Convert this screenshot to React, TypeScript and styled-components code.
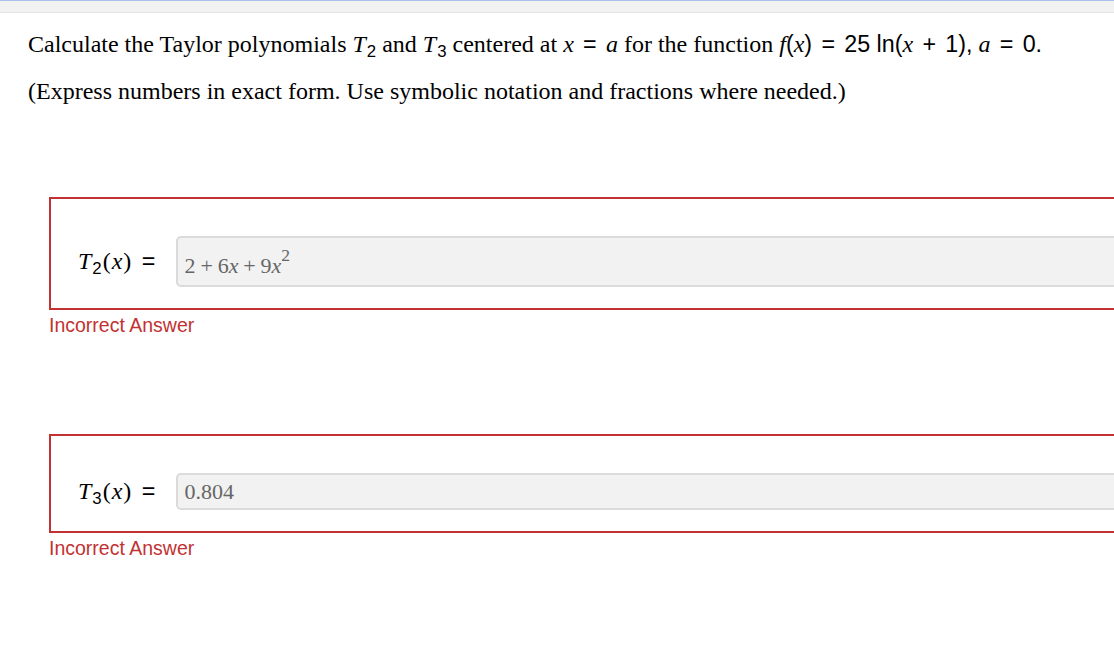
import styled, { createGlobalStyle } from "styled-components";

const GlobalStyle = createGlobalStyle`
  html, body {
    margin: 0;
    padding: 0;
    background: #ffffff;
    overflow-x: hidden;
  }
  body {
    font-family: "Liberation Serif", "Times New Roman", serif;
    color: #000;
  }
  *, *::before, *::after {
    box-sizing: border-box;
  }
`;

interface FieldProps {
  $tall?: boolean;
}

interface AnswerProps {
  sub: string;
  tall?: boolean;
  value: React.ReactNode;
}

const Answer: React.FC<AnswerProps> = ({ sub, tall, value }) => {
  return (
    <AnswerBlock>
      <Box>
        <Label>
          <Var>T</Var>
          <Sub>{sub}</Sub>
          <Paren>(</Paren>
          <Var>x</Var>
          <Paren>)</Paren>
          <Op>=</Op>
        </Label>
        <Field $tall={tall}>{value}</Field>
      </Box>
      <Feedback>Incorrect Answer</Feedback>
    </AnswerBlock>
  );
};

const App = () => {
  return (
    <>
      <GlobalStyle />
      <TopBar />
      <Content>
        <Prompt>
          Calculate the Taylor polynomials <Var>T</Var>
          <Sub>2</Sub> and <Var>T</Var>
          <Sub>3</Sub> centered at <Var>x</Var>
          <Op>=</Op>
          <Var>a</Var> for the function <Var>f</Var>
          <Num>(</Num>
          <Var>x</Var>
          <Num>)</Num>
          <Op>=</Op>
          <Num>25 ln(</Num>
          <Var>x</Var>
          <Op>+</Op>
          <Num>1),</Num> <Var>a</Var>
          <Op>=</Op>
          <Num>0.</Num>
        </Prompt>
        <Note>
          (Express numbers in exact form. Use symbolic notation and fractions
          where needed.)
        </Note>
        <Answer
          sub="2"
          tall
          value={
            <>
              2<FieldOp>+</FieldOp>6<i>x</i>
              <FieldOp>+</FieldOp>9<i>x</i>
              <Sup>2</Sup>
            </>
          }
        />
        <Answer sub="3" value="0.804" />
      </Content>
    </>
  );
};

export default App;

const TopBar = styled.div`
  height: 13px;
  border-top: 1px solid #a8c0ea;
  border-bottom: 1px solid #e3e3e3;
  background: #f2f2f2;
`;

const Content = styled.main`
  padding-left: 28px;
`;

const Prompt = styled.p`
  margin: 18px 0 0;
  font-size: 24px;
  line-height: 26px;
  white-space: nowrap;
`;

const Note = styled(Prompt)`
  margin-top: 21px;
`;

const Var = styled.i`
  font-family: "Liberation Serif", "Times New Roman", serif;
  font-style: italic;
`;

const Sub = styled.sub`
  font-family: "Liberation Sans", Arial, sans-serif;
  font-size: 0.7em;
  vertical-align: -0.3em;
  line-height: 0;
  margin-left: 1px;
`;

const Num = styled.span`
  font-family: "Liberation Sans", Arial, sans-serif;
  font-size: 0.97em;
`;

const Op = styled(Num)`
  margin: 0 0.4em;
`;

const Paren = styled.span`
  font-family: "Liberation Serif", "Times New Roman", serif;
  margin: 0 1px;
`;

const AnswerBlock = styled.section`
  margin: 93px 0 0 21px;

  & + & {
    margin-top: 98px;
  }
`;

const Box = styled.div`
  display: flex;
  align-items: center;
  gap: 11px;
  margin-right: -40px;
  padding: 37px 0 21px 27px;
  border: 2px solid #c23232;
`;

const Label = styled.div`
  font-size: 24px;
  white-space: nowrap;
`;

const Field = styled.div<FieldProps>`
  flex: 1;
  display: flex;
  align-items: ${(p) => (p.$tall ? "flex-end" : "center")};
  height: ${(p) => (p.$tall ? "51px" : "37px")};
  padding: ${(p) => (p.$tall ? "0 7px 7px" : "0 7px")};
  border: 2px solid #dbdbdb;
  border-radius: 5px;
  background: #f2f2f2;
  color: #666;
  font-size: 22px;
  line-height: 24px;
`;

const FieldOp = styled.span`
  margin: 0 0.22em;
`;

const Sup = styled.span`
  position: relative;
  top: -0.6em;
  font-size: 0.8em;
`;

const Feedback = styled.div`
  margin-top: 4px;
  font-family: "Liberation Sans", Arial, sans-serif;
  font-size: 19.5px;
  line-height: 22px;
  color: #c23232;
`;
